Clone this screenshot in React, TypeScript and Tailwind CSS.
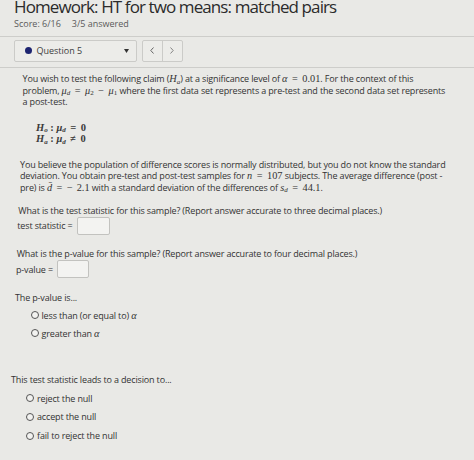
import React from "react";

const serif = "font-['Liberation_Serif',serif]";

// inline math bits, roughly MathJax sized
const M = ({ children }: { children: React.ReactNode }) => (
  <span className={`${serif} text-[10.3px] tracking-normal`}>{children}</span>
);
const Sub = ({ children }: { children: React.ReactNode }) => (
  <sub className="text-[7px] leading-none">{children}</sub>
);
const Eq = ({ children = "=" }: { children?: React.ReactNode }) => (
  <span className="mx-[4.5px]">{children}</span>
);

function Radio({ children }: { children: React.ReactNode }) {
  return (
    <div className="flex h-[11.5px] items-center gap-[3px]">
      <span className="h-[8px] w-[8px] shrink-0 rounded-full border border-[#555] bg-[#f2f2f0]" />
      <span>{children}</span>
    </div>
  );
}

export default function App() {
  return (
    <div className="h-[460px] w-[474px] overflow-hidden bg-[#e9e9e6] font-['Open_Sans',sans-serif] font-medium text-[#333]">
      <header className="pl-[14px]">
        <h1 className="mt-[-3.5px] text-[17px] leading-[20px] font-normal tracking-[-0.9px] text-[#2b2b2b]">
          Homework: HT for two means: matched pairs
        </h1>
        <div className="mt-[1px] flex gap-[11px] text-[9px] leading-[12px] font-normal text-[#5a5a5a]">
          <span>Score: 6/16</span>
          <span>3/5 answered</span>
        </div>
      </header>
      <div className="mt-[6px] border-t border-[#cdcdca]" />

      <div className="flex gap-[5px] pl-[14px] pt-[3px]">
        <div className="flex h-[22px] w-[123px] items-center rounded-[2px] border border-[#cbcbc8] bg-[#ecece9] pl-[10px] pr-[7px] text-[9px] font-normal">
          <span className="h-[6.5px] w-[6.5px] rounded-full bg-[#1d2470]" />
          <span className="ml-[5px] text-[#3d3d3d]">Question 5</span>
          <svg className="ml-auto" width="5" height="4" viewBox="0 0 5 4">
            <path d="M0 0H5L2.5 4Z" fill="#333" />
          </svg>
        </div>
        <div className="flex h-[22px] w-[41px] rounded-[2px] border border-[#cbcbc8] bg-[#ecece9]">
          <span className="flex w-1/2 items-center justify-center border-r border-[#cbcbc8]">
            <svg width="4" height="7" viewBox="0 0 4 7">
              <path d="M3.5 0.5L0.8 3.5L3.5 6.5" fill="none" stroke="#555" strokeWidth="0.9" />
            </svg>
          </span>
          <span className="flex w-1/2 items-center justify-center">
            <svg width="4" height="7" viewBox="0 0 4 7">
              <path d="M0.5 0.5L3.2 3.5L0.5 6.5" fill="none" stroke="#777" strokeWidth="0.9" />
            </svg>
          </span>
        </div>
      </div>
      <div className="mt-[5px] border-t border-[#cdcdca]" />

      <main className="pt-[5.5px] text-[9px] leading-[11.5px] tracking-[-0.15px]">
        <p className="pl-[22.5px] pr-[25px]">
          You wish to test the following claim (<M><i>H</i><Sub><i>a</i></Sub></M>) at a significance level of{" "}
          <M><i>α</i><Eq />0.01</M>. For the context of this problem,{" "}
          <M>
            <i>μ</i><Sub><i>d</i></Sub><Eq /><i>μ</i><Sub>2</Sub><Eq>−</Eq><i>μ</i><Sub>1</Sub>
          </M>{" "}
          where the first data set represents a pre-test and the second data set represents a post-test.
        </p>

        <div className={`mt-[14px] pl-[36px] ${serif} text-[10.5px] font-bold leading-[11.5px] tracking-normal text-[#3a3a3a]`}>
          <div>
            <i>H</i><Sub><i>o</i></Sub> : <i>μ</i><Sub><i>d</i></Sub><Eq />0
          </div>
          <div>
            <i>H</i><Sub><i>a</i></Sub> : <i>μ</i><Sub><i>d</i></Sub><Eq>≠</Eq>0
          </div>
        </div>

        <p className="mt-[14px] pl-[20px] pr-[22px]">
          You believe the population of difference scores is normally distributed, but you do not know the standard
          deviation. You obtain pre-test and post-test samples for <M><i>n</i><Eq />107</M> subjects. The average
          difference (post - pre) is <M><i>d̄</i><Eq /><span className="mr-[4px]">−</span>2.1</M> with a standard deviation of the
          differences of <M><i>s</i><Sub><i>d</i></Sub><Eq />44.1</M>.
        </p>

        <p className="mt-[11.5px] pl-[18.3px]">
          What is the test statistic for this sample? (Report answer accurate to three decimal places.)
        </p>
        <div className="mt-[0.5px] flex h-[18px] items-center pl-[17.3px]">
          <span>test statistic =</span>
          <span className="ml-[4px] h-[18px] w-[33px] rounded-[2px] border border-[#c2c2bf] bg-[#f3f3f1]" />
        </div>

        <p className="mt-[13.3px] pl-[16.7px]">
          What is the p-value for this sample? (Report answer accurate to four decimal places.)
        </p>
        <div className="mt-[1px] flex h-[18px] items-center pl-[16px]">
          <span>p-value =</span>
          <span className="ml-[4px] h-[18px] w-[32px] rounded-[2px] border border-[#c2c2bf] bg-[#f3f3f1]" />
        </div>

        <p className="mt-[13.3px] pl-[15px]">The p-value is...</p>
        <div className="mt-[6.5px] flex flex-col gap-[6.5px] pl-[30.5px]">
          <Radio>
            less than (or equal to) <M><i>α</i></M>
          </Radio>
          <Radio>
            greater than <M><i>α</i></M>
          </Radio>
        </div>

        <p className="mt-[35px] pl-[11px]">This test statistic leads to a decision to...</p>
        <div className="mt-[7px] flex flex-col gap-[7.2px] pl-[26px]">
          <Radio>reject the null</Radio>
          <Radio>accept the null</Radio>
          <Radio>fail to reject the null</Radio>
        </div>
      </main>
    </div>
  );
}
